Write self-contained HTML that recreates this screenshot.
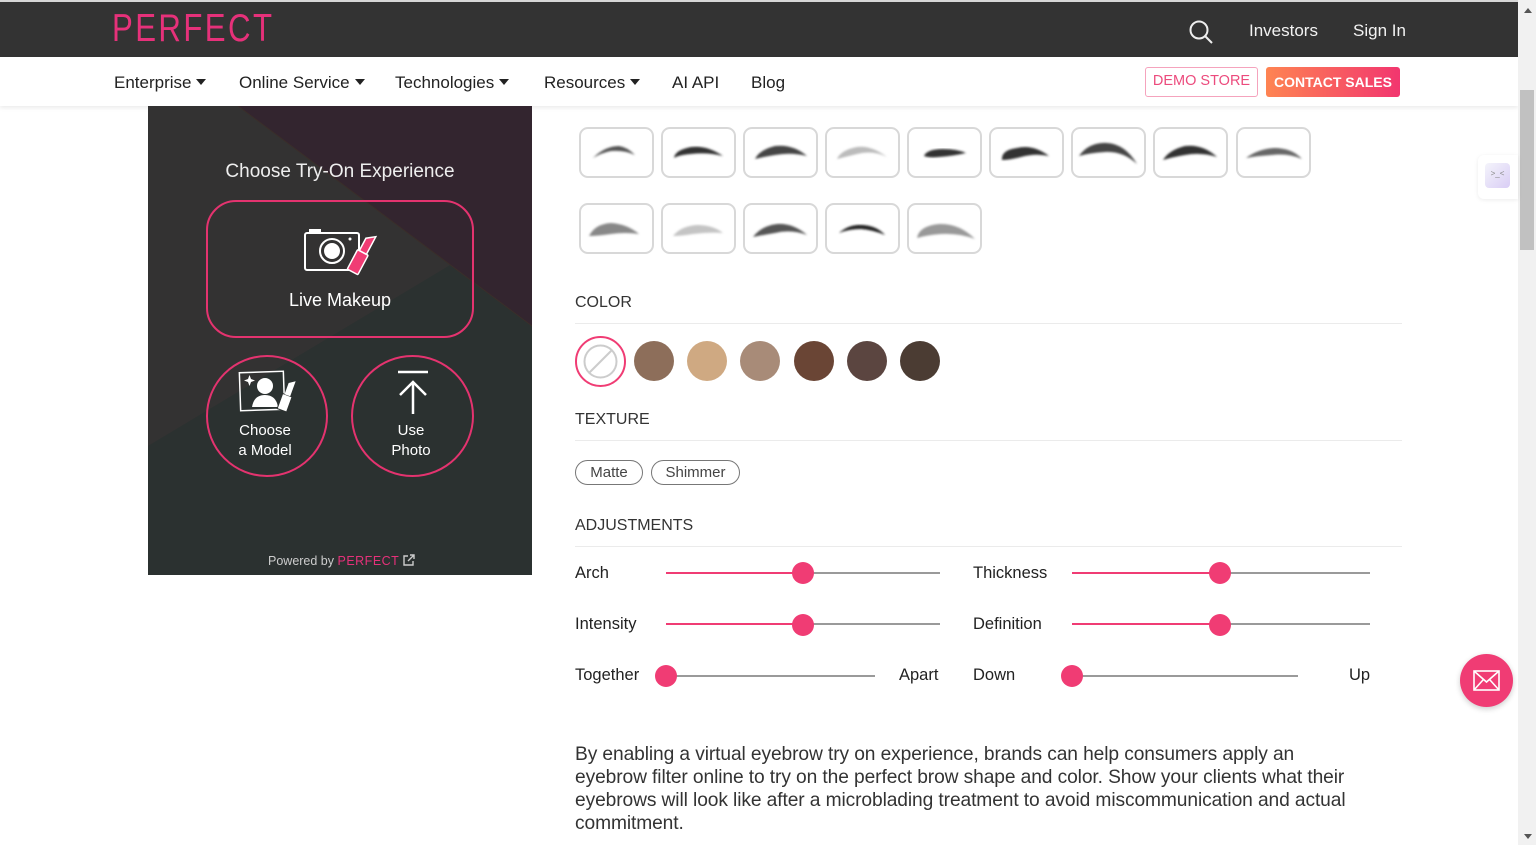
<!DOCTYPE html>
<html><head><meta charset="utf-8"><style>
*{margin:0;padding:0;box-sizing:border-box}
body{width:1536px;height:845px;overflow:hidden;background:#fff;font-family:"Liberation Sans",sans-serif;color:#333;position:relative}
.a{position:absolute}
.top{left:0;top:0;width:1518px;height:57px;background:#333;border-top:2px solid #d6d6d6}
.logo{left:112px;top:7px;font-size:39px;color:#e6317a;letter-spacing:3px;transform:scaleX(.8);transform-origin:left}
.tl{color:#f2f2f2;font-size:17px;top:21px}
.nav{left:0;top:57px;width:1518px;height:49px;background:#fff;box-shadow:0 2px 4px rgba(0,0,0,.08)}
.ni{top:73px;font-size:17px;color:#222}
.ni b{display:inline-block;width:0;height:0;border-left:5px solid transparent;border-right:5px solid transparent;border-top:6px solid #222;margin-left:5px;vertical-align:3px}
.btn{top:67px;height:30px;font-size:14.5px;line-height:30px;text-align:center;border-radius:3px}
.pk{border:2.5px solid #e4336f}
.wt{color:#fff;text-align:center}
.eb{width:75px;height:51px;border:2px solid #d8d8d8;border-radius:9px;background:#fff}
.sec{font-size:16px;color:#333;left:575px}
.hr{left:575px;width:827px;height:1px;background:#ebebeb}
.sw{width:40px;height:40px;border-radius:50%;top:341px}
.lab{font-size:16.5px;color:#222}
.tr{height:2px;background:#9a9a9a}
.tp{height:2px;background:#f03c74}
.th{width:22px;height:22px;border-radius:50%;background:#f03c74}
.chip{top:460px;height:25px;border:1.5px solid #777;border-radius:13px;font-size:15px;line-height:23px;text-align:center;color:#444}
</style></head><body>
<div class="a top"></div>
<div class="a logo">PERFECT</div>
<svg class="a" style="left:1188px;top:19px" width="26" height="26" viewBox="0 0 26 26"><circle cx="11" cy="11" r="8.5" fill="none" stroke="#eee" stroke-width="2"/><line x1="17.5" y1="17.5" x2="24" y2="24" stroke="#eee" stroke-width="2"/></svg>
<div class="a tl" style="left:1249px">Investors</div>
<div class="a tl" style="left:1353px">Sign In</div>
<div class="a nav"></div>
<div class="a ni" style="left:114px">Enterprise<b></b></div>
<div class="a ni" style="left:239px">Online Service<b></b></div>
<div class="a ni" style="left:395px">Technologies<b></b></div>
<div class="a ni" style="left:544px">Resources<b></b></div>
<div class="a ni" style="left:672px">AI API</div>
<div class="a ni" style="left:751px">Blog</div>
<div class="a btn" style="left:1145px;width:113px;border:1.5px solid #f5a3bd;color:#ec4b7d;line-height:27px">DEMO STORE</div>
<div class="a btn" style="left:1266px;width:134px;background:linear-gradient(90deg,#fe8452,#f2366f);color:#fff;font-weight:bold;font-size:14px">CONTACT SALES</div>
<div class="a" style="left:1518px;top:0;width:18px;height:845px;background:#f1f1f1"></div>
<div class="a" style="left:1520px;top:90px;width:14px;height:160px;background:#c1c1c1"></div>
<div class="a" style="left:1524px;top:8px;width:0;height:0;border-left:4px solid transparent;border-right:4px solid transparent;border-bottom:5px solid #555"></div>
<div class="a" style="left:1524px;top:834px;width:0;height:0;border-left:4px solid transparent;border-right:4px solid transparent;border-top:5px solid #555"></div>

<svg class="a" style="left:148px;top:106px" width="384" height="469" viewBox="0 0 384 469"><rect width="384" height="469" fill="#2b3130"/><polygon points="0,0 384,0 384,110 0,340" fill="#333232"/><polygon points="90,0 384,0 384,220" fill="#33252f"/><line x1="90" y1="0" x2="384" y2="220" stroke="#3a2e2a" stroke-width="1"/></svg>
<div class="a wt" style="left:148px;width:384px;top:161px;font-size:19px;color:#eee">Choose Try-On Experience</div>
<div class="a pk" style="left:206px;top:200px;width:268px;height:138px;border-radius:30px"></div>
<svg class="a" style="left:303px;top:226px" width="76" height="52" viewBox="0 0 76 52"><rect x="2" y="7" width="54" height="37" rx="2" fill="none" stroke="#fff" stroke-width="2"/><rect x="6" y="3" width="12" height="4" fill="#fff"/><circle cx="29" cy="25" r="12" fill="none" stroke="#fff" stroke-width="2"/><circle cx="29" cy="25" r="8" fill="#fff"/><circle cx="47" cy="13" r="1.5" fill="#fff"/><g transform="rotate(28 58 30)"><rect x="52" y="26" width="12" height="22" rx="1" fill="#f03c74" stroke="#fff" stroke-width="1.5"/><path d="M54 26 L54 12 L62 6 L62 26 Z" fill="#f03c74" stroke="#fff" stroke-width="1.5"/></g></svg>
<div class="a wt" style="left:206px;width:268px;top:290px;font-size:18px">Live Makeup</div>
<div class="a pk" style="left:206px;top:355px;width:122px;height:122px;border-radius:50%"></div>
<div class="a pk" style="left:351px;top:355px;width:123px;height:122px;border-radius:50%"></div>
<svg class="a" style="left:238px;top:369px" width="60" height="46" viewBox="0 0 60 46"><rect x="2" y="3" width="44" height="38" fill="none" stroke="#fff" stroke-width="1.5" transform="rotate(-2 24 22)"/><circle cx="27" cy="17" r="8" fill="#fff"/><path d="M14 38 Q16 26 27 26 Q38 26 40 38 Z" fill="#fff"/><path d="M10 10 l1.5 -4 1.5 4 4 1.5 -4 1.5 -1.5 4 -1.5 -4 -4 -1.5 z" fill="#fff"/><g transform="rotate(20 48 30)"><rect x="43" y="26" width="10" height="16" fill="#fff" stroke="#2b302f"/><path d="M45 26 L45 14 L51 10 L51 26 Z" fill="#fff"/></g></svg>
<svg class="a" style="left:396px;top:370px" width="34" height="46" viewBox="0 0 34 46"><line x1="2" y1="2" x2="32" y2="2" stroke="#fff" stroke-width="2.5"/><line x1="17" y1="12" x2="17" y2="44" stroke="#fff" stroke-width="2.5"/><path d="M4 25 L17 12 L30 25" fill="none" stroke="#fff" stroke-width="2.5"/></svg>
<div class="a wt" style="left:206px;width:118px;top:421px;font-size:15px;line-height:20px">Choose<br>a Model</div>
<div class="a wt" style="left:351px;width:120px;top:421px;font-size:15px;line-height:20px">Use<br>Photo</div>
<div class="a" style="left:268px;top:554px;font-size:12.5px;color:#ccc">Powered by <span style="color:#e6317a;letter-spacing:0.5px">PERFECT</span> <svg width="12" height="12" viewBox="0 0 12 12" style="vertical-align:-1px"><path d="M5 2H1v9h9V7M7 1h4v4M11 1 5 7" fill="none" stroke="#ccc" stroke-width="1.4"/></svg></div>

<svg width="0" height="0" style="position:absolute"><defs><filter id="bl"><feGaussianBlur stdDeviation="1"/></filter></defs></svg>
<div class="a eb" style="left:579px;top:127px"><svg width="71" height="47"><path d="M12 29 Q24 17 38 17 Q46 18 54 26 Q44 21 30 22 Q20 24 12 29Z" fill="#555" filter="url(#bl)"/></svg></div>
<div class="a eb" style="left:661px;top:127px"><svg width="71" height="47"><path d="M11 29 Q12 21 28 18 Q44 16 60 27 Q44 23 28 25 Q16 26 11 29Z" fill="#333" filter="url(#bl)"/></svg></div>
<div class="a eb" style="left:743px;top:127px"><svg width="71" height="47"><path d="M10 30 Q14 21 30 17 Q48 15 62 27 Q46 23 30 26 Q18 28 10 30Z" fill="#444" filter="url(#bl)"/></svg></div>
<div class="a eb" style="left:825px;top:127px"><svg width="71" height="47"><path d="M10 30 Q14 21 30 18 Q44 16 60 28 Q46 21 30 25 Q18 28 10 30Z" fill="#bbb" filter="url(#bl)"/></svg></div>
<div class="a eb" style="left:907px;top:127px"><svg width="71" height="47"><path d="M15 27 Q18 20 34 20 Q48 20 57 24 Q44 27 30 28 Q20 29 15 27Z" fill="#333" filter="url(#bl)"/></svg></div>
<div class="a eb" style="left:989px;top:127px"><svg width="71" height="47"><path d="M11 31 Q10 21 26 19 Q42 15 58 27 Q44 24 30 28 Q18 31 11 31Z" fill="#333" filter="url(#bl)"/></svg></div>
<div class="a eb" style="left:1071px;top:127px"><svg width="71" height="47"><path d="M6 27 Q16 13 34 14 Q52 15 64 35 Q50 22 32 23 Q16 24 6 27Z" fill="#444" filter="url(#bl)"/></svg></div>
<div class="a eb" style="left:1153px;top:127px"><svg width="71" height="47"><path d="M8 31 Q14 21 30 17 Q48 15 62 28 Q46 23 30 26 Q18 28 8 31Z" fill="#333" filter="url(#bl)"/></svg></div>
<div class="a eb" style="left:1236px;top:127px"><svg width="71" height="47"><path d="M8 29 Q20 20 36 19 Q54 19 64 30 Q50 24 34 26 Q18 27 8 29Z" fill="#666" filter="url(#bl)"/></svg></div>
<div class="a eb" style="left:579px;top:203px"><svg width="71" height="47"><path d="M8 31 Q14 19 30 18 Q46 19 58 29 Q44 27 30 29 Q16 31 8 31Z" fill="#888" filter="url(#bl)"/></svg></div>
<div class="a eb" style="left:661px;top:203px"><svg width="71" height="47"><path d="M10 31 Q18 21 34 20 Q50 20 60 28 Q46 27 30 29 Q18 31 10 31Z" fill="#c4c4c4" filter="url(#bl)"/></svg></div>
<div class="a eb" style="left:743px;top:203px"><svg width="71" height="47"><path d="M8 32 Q16 21 32 19 Q48 18 62 30 Q46 24 30 28 Q18 30 8 32Z" fill="#555" filter="url(#bl)"/></svg></div>
<div class="a eb" style="left:825px;top:203px"><svg width="71" height="47"><path d="M12 28 Q22 19 36 20 Q50 21 58 30 Q46 25 34 24 Q22 24 12 28Z" fill="#222" filter="url(#bl)"/></svg></div>
<div class="a eb" style="left:907px;top:203px"><svg width="71" height="47"><path d="M8 33 Q10 21 30 19 Q50 18 66 34 Q50 28 32 29 Q18 30 8 33Z" fill="#999" filter="url(#bl)"/></svg></div>

<div class="a sec" style="top:294px">COLOR</div>
<div class="a hr" style="top:323px"></div>
<div class="a" style="left:575px;top:336px;width:51px;height:51px;border-radius:50%;border:2.5px solid #f03c74"></div>
<svg class="a" style="left:583px;top:344px" width="35" height="35" viewBox="0 0 35 35"><circle cx="17.5" cy="17.5" r="16" fill="#fff" stroke="#ccc" stroke-width="2"/><line x1="6" y1="29" x2="29" y2="6" stroke="#ccc" stroke-width="2"/></svg>
<div class="a sw" style="left:634px;background:#8d6e5a"></div>
<div class="a sw" style="left:687px;background:#cfa982"></div>
<div class="a sw" style="left:740px;background:#a88b78"></div>
<div class="a sw" style="left:794px;background:#6a4535"></div>
<div class="a sw" style="left:847px;background:#5b4540"></div>
<div class="a sw" style="left:900px;background:#4b3c33"></div>

<div class="a sec" style="top:411px">TEXTURE</div>
<div class="a hr" style="top:440px"></div>
<div class="a chip" style="left:575px;width:68px">Matte</div>
<div class="a chip" style="left:651px;width:89px">Shimmer</div>

<div class="a sec" style="top:517px">ADJUSTMENTS</div>
<div class="a hr" style="top:546px"></div>

<div class="a lab" style="left:575px;top:564px">Arch</div>
<div class="a tr" style="left:666px;top:572px;width:274px"></div><div class="a tp" style="left:666px;top:572px;width:137px"></div><div class="a th" style="left:792px;top:562px"></div>
<div class="a lab" style="left:973px;top:564px">Thickness</div>
<div class="a tr" style="left:1072px;top:572px;width:298px"></div><div class="a tp" style="left:1072px;top:572px;width:148px"></div><div class="a th" style="left:1209px;top:562px"></div>

<div class="a lab" style="left:575px;top:615px">Intensity</div>
<div class="a tr" style="left:666px;top:623px;width:274px"></div><div class="a tp" style="left:666px;top:623px;width:137px"></div><div class="a th" style="left:792px;top:614px"></div>
<div class="a lab" style="left:973px;top:615px">Definition</div>
<div class="a tr" style="left:1072px;top:623px;width:298px"></div><div class="a tp" style="left:1072px;top:623px;width:148px"></div><div class="a th" style="left:1209px;top:614px"></div>

<div class="a lab" style="left:575px;top:666px">Together</div>
<div class="a tr" style="left:666px;top:675px;width:209px"></div><div class="a th" style="left:655px;top:665px"></div>
<div class="a lab" style="left:899px;top:666px">Apart</div>
<div class="a lab" style="left:973px;top:666px">Down</div>
<div class="a tr" style="left:1072px;top:675px;width:226px"></div><div class="a th" style="left:1061px;top:665px"></div>
<div class="a lab" style="left:1349px;top:666px">Up</div>

<div class="a" style="left:575px;top:743px;font-size:19.2px;line-height:23px;color:#333;white-space:nowrap;letter-spacing:-0.1px">By enabling a virtual eyebrow try on experience, brands can help consumers apply an<br>eyebrow filter online to try on the perfect brow shape and color. Show your clients what their<br>eyebrows will look like after a microblading treatment to avoid miscommunication and actual<br>commitment.</div>

<div class="a" style="left:1478px;top:155px;width:40px;height:44px;background:#fff;border-radius:6px 0 0 6px;box-shadow:0 1px 4px rgba(0,0,0,.08)"></div>
<div class="a" style="left:1485px;top:163px;width:25px;height:25px;border-radius:4px;background:linear-gradient(135deg,#f4f4fb,#d9cdf5);font-size:8px;color:#888;text-align:center;line-height:22px">&gt;_&lt;</div>
<div class="a" style="left:1460px;top:654px;width:53px;height:53px;border-radius:50%;background:#f03c74;box-shadow:0 2px 6px rgba(0,0,0,.2)"></div>
<svg class="a" style="left:1473px;top:670px" width="27" height="21" viewBox="0 0 27 21"><rect x="1" y="1" width="25" height="19" fill="none" stroke="#fff" stroke-width="1.6"/><path d="M1 1 L13.5 12 L26 1 M1 20 L10 10 M26 20 L17 10" fill="none" stroke="#fff" stroke-width="1.6"/></svg>
</body></html>
